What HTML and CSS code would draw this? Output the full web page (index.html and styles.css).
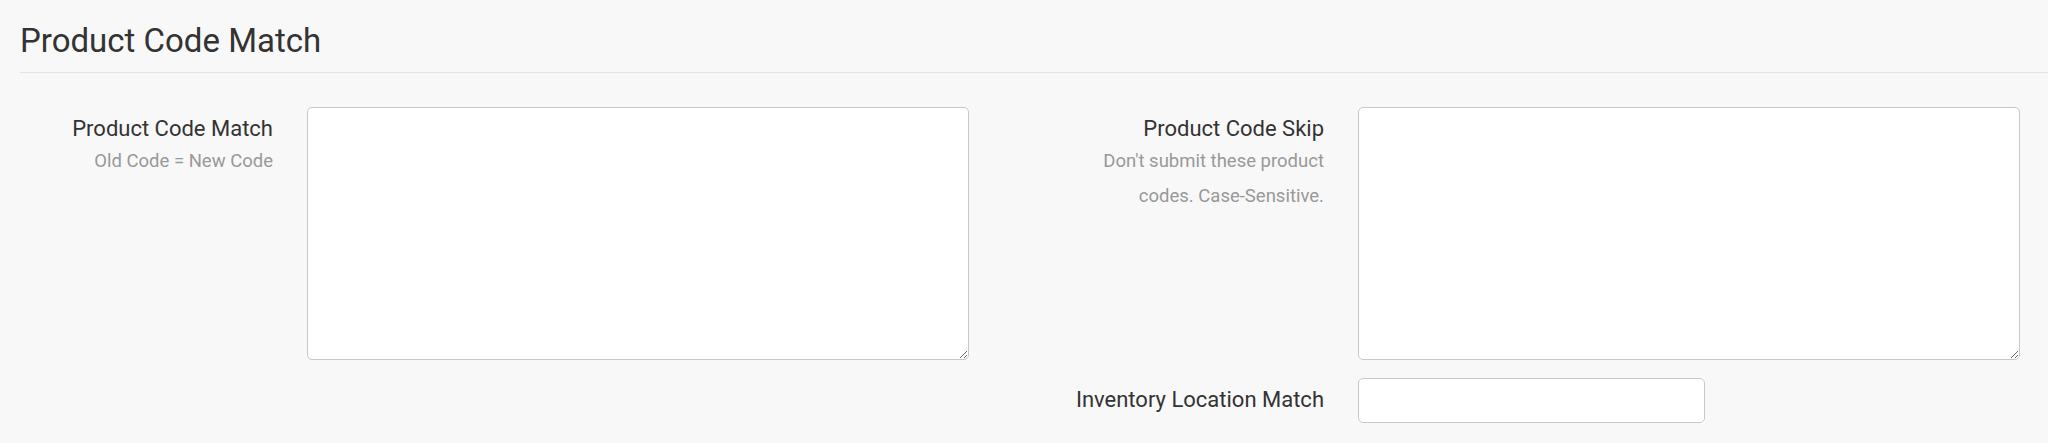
FILE: index.html
```html
<!DOCTYPE html>
<html lang="en">

<head>
    <meta charset="UTF-8">
    <meta name="viewport" content="width=device-width, initial-scale=1.0">
    <title>Product Code Match</title>
    <link rel="stylesheet" href="styles.css">
</head>

<body>
    <div class="settings-page">
        <h1 class="section-title">Product Code Match</h1>

        <form class="settings-form">
            <div class="form-col">
                <div class="form-row">
                    <div class="field-label">
                        <label for="code-match">Product Code Match</label>
                        <div class="help-text">Old Code = New Code</div>
                    </div>
                    <textarea id="code-match" class="field-textarea"></textarea>
                </div>
            </div>

            <div class="form-col">
                <div class="form-row">
                    <div class="field-label">
                        <label for="code-skip">Product Code Skip</label>
                        <div class="help-text">Don't submit these product codes. Case-Sensitive.</div>
                    </div>
                    <textarea id="code-skip" class="field-textarea"></textarea>
                </div>
                <div class="form-row">
                    <div class="field-label">
                        <label for="location-match">Inventory Location Match</label>
                    </div>
                    <div>
                        <input type="text" id="location-match" class="field-input">
                    </div>
                </div>
            </div>
        </form>
    </div>
</body>

</html>
```

FILE: styles.css
```css
body {
    font-family: Roboto, "Liberation Sans", Arial, sans-serif;
    margin: 0;
    padding: 0;
    background-color: #f8f8f8;
    color: #333;
}

.settings-page {
    padding-left: 20px;
}

.section-title {
    margin: 0;
    padding: 21px 0 11px;
    font-size: 33px;
    font-weight: 400;
    line-height: 40px;
    color: #333;
    border-bottom: 1px solid #e2e2e2;
}

.settings-form {
    display: grid;
    grid-template-columns: 1fr 1fr;
    column-gap: 102px;
    margin-top: 34px;
    padding-right: 28px;
}

.form-row {
    display: grid;
    grid-template-columns: 253px 1fr;
    column-gap: 34px;
    margin-bottom: 18px;
}

.field-label {
    text-align: right;
    padding-top: 7px;
}

.field-label label {
    display: block;
    font-size: 22px;
    line-height: 30px;
    color: #333;
}

.help-text {
    font-size: 18.5px;
    line-height: 35px;
    color: #999;
}

.field-textarea,
.field-input {
    box-sizing: border-box;
    display: block;
    background: #fff;
    border: 1px solid #c8c8c8;
    border-radius: 5px;
    font-family: inherit;
    font-size: 18px;
    padding: 8px 12px;
    margin: 0;
}

.field-textarea {
    width: 100%;
    height: 253px;
}

.field-input {
    width: 347px;
    height: 45px;
}
```
